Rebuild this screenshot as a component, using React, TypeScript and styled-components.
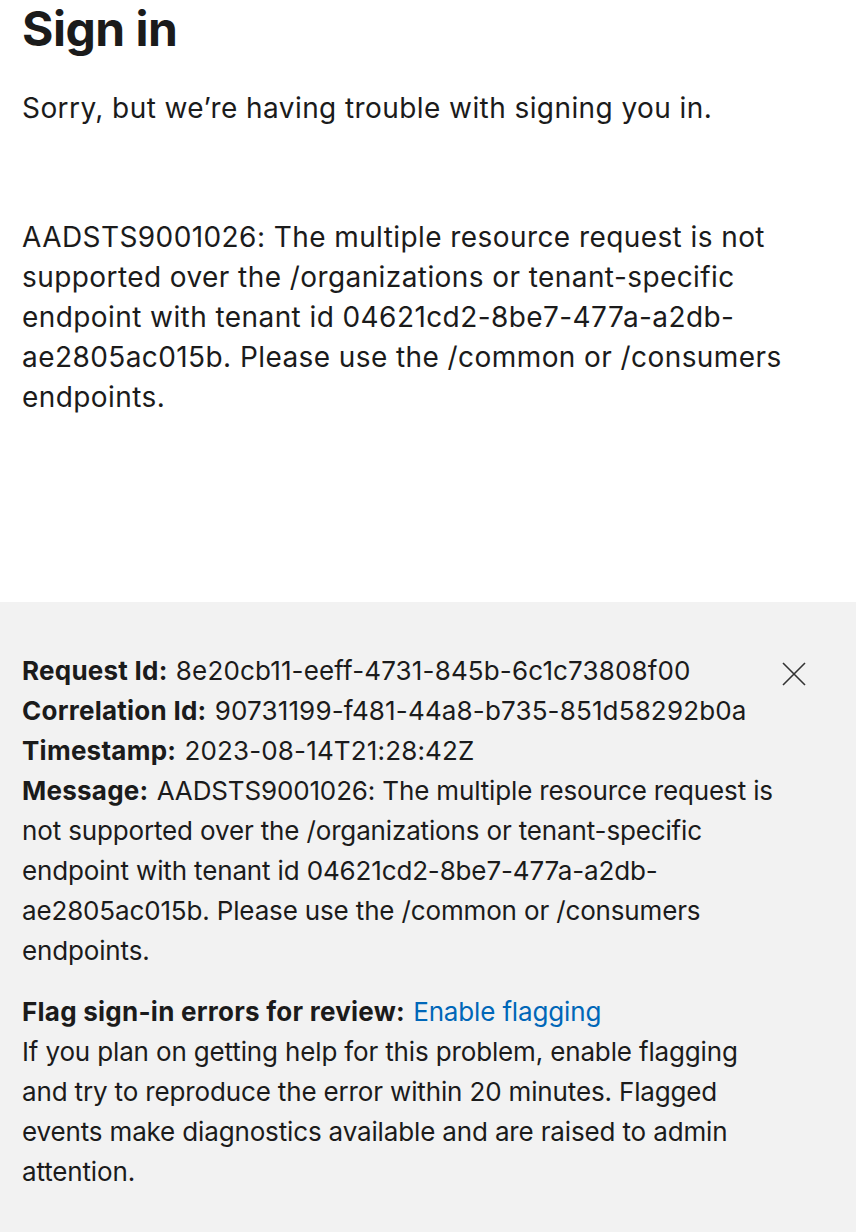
import React from "react";
import styled, { createGlobalStyle } from "styled-components";

const GlobalStyle = createGlobalStyle`
  html, body {
    margin: 0;
    padding: 0;
    background: #ffffff;
  }
  body {
    font-family: Inter, "Noto Sans", "Liberation Sans", sans-serif;
    color: #1b1b1b;
    -webkit-font-smoothing: antialiased;
  }
`;

const Page = styled.div`
  display: flex;
  flex-direction: column;
  min-height: 100vh;
  background: #ffffff;
`;

const Main = styled.main`
  padding: 0 22px 185px;
`;

const Title = styled.h1`
  margin: 0;
  font-size: 48px;
  line-height: 58px;
  font-weight: 700;
  letter-spacing: -0.5px;
`;

const Text = styled.p<{ $top: number }>`
  margin: ${(p) => p.$top}px 0 0;
  font-size: 28px;
  line-height: 40px;
  font-weight: 400;
  letter-spacing: 0.42px;
`;

const Panel = styled.section`
  flex: 1;
  background: #f2f2f2;
  display: flex;
  align-items: flex-start;
  gap: 2px;
  padding: 49px 50px 40px 22px;
`;

const Details = styled.div`
  flex: 1;
  display: flex;
  flex-direction: column;
  gap: 21px;
`;

const Block = styled.div`
  font-size: 26px;
  line-height: 40px;
  letter-spacing: -0.15px;
`;

const Row = styled.div``;

const Label = styled.span`
  font-weight: 700;
  letter-spacing: 0.25px;
  margin-right: 1px;
`;

const Ident = styled.span`
  letter-spacing: 0.15px;
`;

const Link = styled.a`
  color: #0067b8;
  text-decoration: none;
`;

const CloseButton = styled.button`
  flex: none;
  margin-top: 11px;
  width: 24px;
  height: 24px;
  padding: 0;
  border: none;
  background: transparent;
  color: #333333;
  display: flex;
  align-items: center;
  justify-content: center;
  cursor: pointer;
`;

const message =
  "AADSTS9001026: The multiple resource request is not supported over the /organizations or tenant-specific endpoint with tenant id 04621cd2-8be7-477a-a2db-ae2805ac015b. Please use the /common or /consumers endpoints.";

export default function App() {
  return (
    <Page>
      <GlobalStyle />
      <Main>
        <Title>Sign in</Title>
        <Text $top={30}>Sorry, but we’re having trouble with signing you in.</Text>
        <Text $top={89}>{message}</Text>
      </Main>
      <Panel>
        <Details>
          <Block>
            <Row>
              <Label>Request Id:</Label> <Ident>8e20cb11-eeff-4731-845b-6c1c73808f00</Ident>
            </Row>
            <Row>
              <Label>Correlation Id:</Label> <Ident>90731199-f481-44a8-b735-851d58292b0a</Ident>
            </Row>
            <Row>
              <Label>Timestamp:</Label> <Ident>2023-08-14T21:28:42Z</Ident>
            </Row>
            <Row>
              <Label>Message:</Label> {message}
            </Row>
          </Block>
          <Block>
            <Row>
              <Label>Flag sign-in errors for review:</Label>{" "}
              <Link href="#">Enable flagging</Link>
            </Row>
            <Row>
              If you plan on getting help for this problem, enable flagging and try to
              reproduce the error within 20 minutes. Flagged events make diagnostics
              available and are raised to admin attention.
            </Row>
          </Block>
        </Details>
        <CloseButton aria-label="Close">
          <svg width="24" height="24" viewBox="0 0 24 24" fill="none">
            <path d="M1 1 L23 23 M23 1 L1 23" stroke="currentColor" strokeWidth="1.6" />
          </svg>
        </CloseButton>
      </Panel>
    </Page>
  );
}
